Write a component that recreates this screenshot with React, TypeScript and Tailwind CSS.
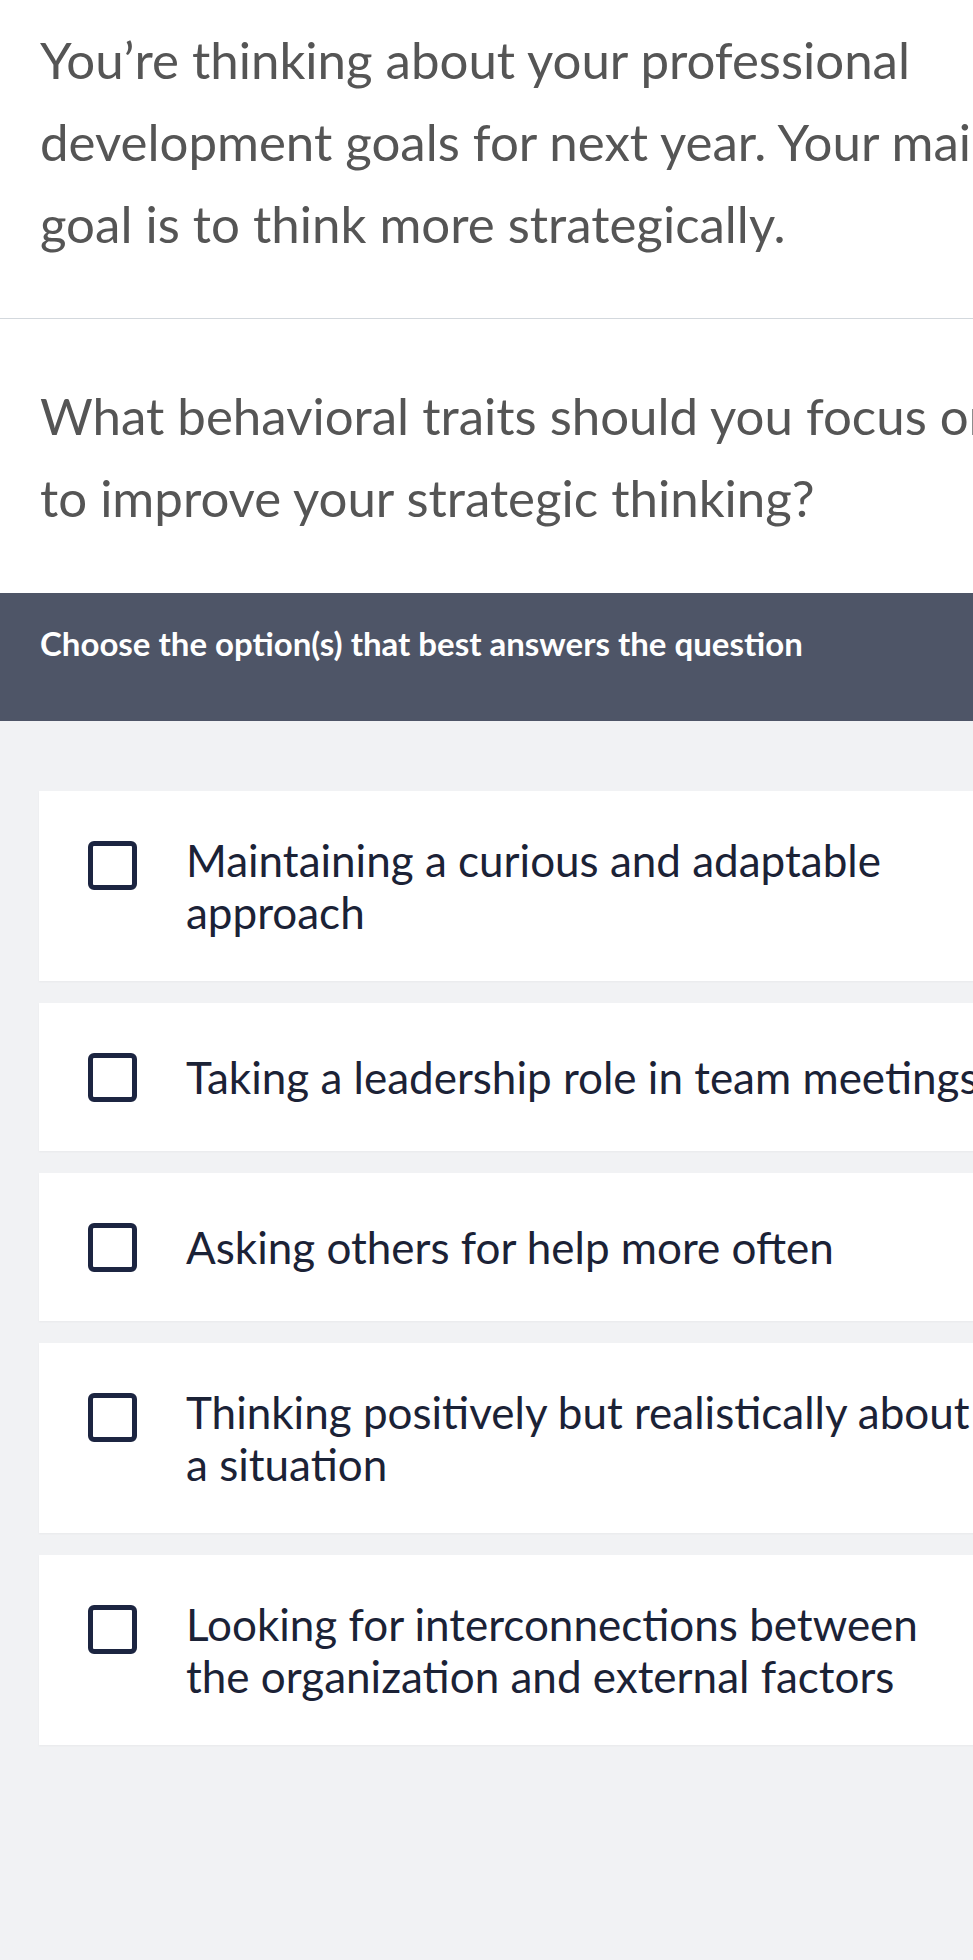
import React from "react";

const options = [
  { text: "Maintaining a curious and adaptable approach" },
  { text: "Taking a leadership role in team meetings" },
  { text: "Asking others for help more often" },
  { text: "Thinking positively but realistically about a situation" },
  { text: "Looking for interconnections between the organization and external factors" },
];

const OptionCard = ({ text }: { text: string }) => {
  return (
    <div className="flex items-start gap-[49px] bg-white py-[43px] pr-[56px] pl-[49px] shadow-[0_1px_2px_rgba(0,0,0,0.04)]">
      <div className="flex h-[62px] shrink-0 items-center">
        <div className="h-[49px] w-[49px] rounded-[6px] border-[5px] border-[#1c2541] bg-white" />
      </div>
      <div className="flex min-h-[62px] items-center text-[44px] leading-[52px] text-[#1b2236]">
        {text}
      </div>
    </div>
  );
};

export default function App() {
  return (
    <div
      className="flex min-h-screen w-full flex-col overflow-hidden bg-[#f1f2f4]"
      style={{ fontFamily: "Lato, 'Noto Sans', sans-serif" }}
    >
      <div className="flex w-[1074px] flex-1 flex-col">
        <div className="bg-white">
          <p className="border-b border-[#d3d8dd] px-10 pt-[19px] pb-[53px] text-[51px] leading-[82px] text-[#555555]">
            You’re thinking about your professional development goals for next year. Your main goal is
            to think more strategically.
          </p>
          <p className="px-10 pt-[56px] pb-[54px] text-[51px] leading-[82px] text-[#555555]">
            What behavioral traits should you focus on to improve your strategic thinking?
          </p>
        </div>

        <div className="h-[128px] bg-[#4e5567] px-10 pt-[26px]">
          <p className="text-[33px] font-bold leading-[48px] text-white">
            Choose the option(s) that best answers the question
          </p>
        </div>

        <div className="flex flex-1 flex-col gap-[22px] px-[39px] pt-[70px] pb-10">
          {options.map((o) => (
            <OptionCard key={o.text} text={o.text} />
          ))}
        </div>
      </div>
    </div>
  );
}
